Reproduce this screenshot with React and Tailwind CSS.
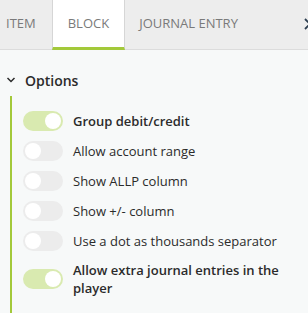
import React from 'react';

function Toggle({ on }) {
  return (
    <div
      className={
        'relative shrink-0 w-[40px] h-[20px] rounded-full ' +
        (on ? 'bg-[#d9eab0]' : 'bg-[#ececec]')
      }
    >
      <div
        className={
          'absolute top-[2px] w-[16px] h-[16px] rounded-full bg-white ' +
          (on ? 'right-[2px]' : 'left-[2px]')
        }
      />
    </div>
  );
}

const options = [
  { label: 'Group debit/credit', on: true },
  { label: 'Allow account range', on: false },
  { label: 'Show ALLP column', on: false },
  { label: 'Show +/- column', on: false },
  { label: 'Use a dot as thousands separator', on: false },
  { label: 'Allow extra journal entries in the player', on: true },
];

export default function App() {
  return (
    <div className="w-[308px] h-[313px] overflow-hidden bg-[#f7f9f9] text-[#2b2b2b] font-['Open_Sans',sans-serif]">
      <div className="flex h-[50px] bg-[#ededed] border-b border-[#dcdcdc] text-[13px] text-[#7a7a7a]">
        <div className="pl-[6px] pr-[16px] flex items-center pb-[2px]">ITEM</div>
        <div className="bg-white border-x border-[#d6d6d6] border-b-[3px] border-b-[#a3c93a] px-[15px] flex items-center mb-[-1px]">
          BLOCK
        </div>
        <div className="px-[14px] flex items-center pb-[2px]">JOURNAL ENTRY</div>
        <div className="ml-auto flex items-center pb-[2px]">
          <svg width="8" height="12" viewBox="0 0 8 12" className="mr-[-4px]">
            <path d="M1 1l5 5-5 5" fill="none" stroke="#2c3e50" strokeWidth="1.8" />
          </svg>
        </div>
      </div>
      <div className="pt-[20px]">
        <div className="flex items-center h-[20px] pl-[6px] text-[14px] font-semibold text-[#2b2b2b]">
          <svg width="10" height="10" viewBox="0 0 10 10" className="mr-[9px]">
            <path d="M1.5 3l3.5 3.5L8.5 3" fill="none" stroke="#2b2b2b" strokeWidth="1.5" />
          </svg>
          Options
        </div>
        <div className="ml-[10px] mt-[6px] border-l-2 border-[#a3c93a] pl-[11px] pt-[15px] pb-[40px] flex flex-col gap-[10px]">
          {options.map((o) => (
            <div key={o.label} className="flex items-center gap-[10px] min-h-[20px]">
              <Toggle on={o.on} />
              <span className={'text-[13px] leading-[18px] ' + (o.on ? 'font-semibold' : '')}>
                {o.label}
              </span>
            </div>
          ))}
        </div>
      </div>
    </div>
  );
}
